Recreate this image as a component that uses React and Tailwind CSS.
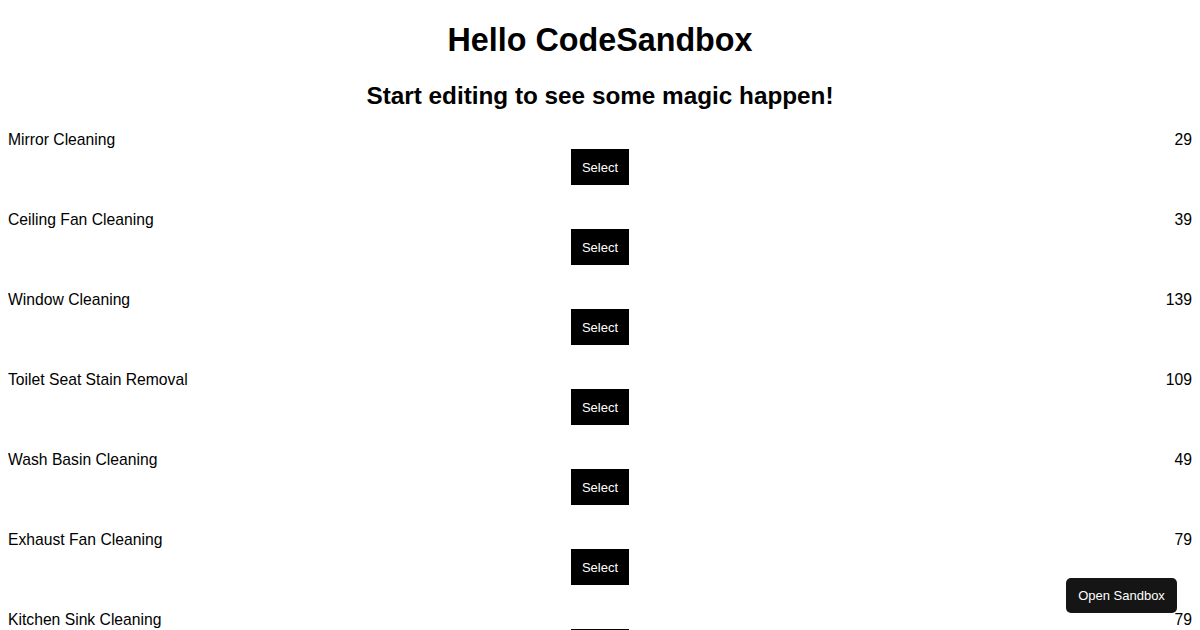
const SERVICES = [
  { name: 'Mirror Cleaning', price: 29 },
  { name: 'Ceiling Fan Cleaning', price: 39 },
  { name: 'Window Cleaning', price: 139 },
  { name: 'Toilet Seat Stain Removal', price: 109 },
  { name: 'Wash Basin Cleaning', price: 49 },
  { name: 'Exhaust Fan Cleaning', price: 79 },
  { name: 'Kitchen Sink Cleaning', price: 79 },
]

function ServiceRow({ name, price }) {
  return (
    <div className="flex flex-col h-20">
      <div className="flex justify-between text-[15.7px] leading-[18px]">
        <span>{name}</span>
        <span>{price}</span>
      </div>
      <button className="self-center h-9 px-[11px] bg-black text-white text-[13px] leading-none">
        Select
      </button>
    </div>
  )
}

export default function App() {
  return (
    <div className="min-h-screen bg-white text-black px-2" style={{ fontFamily: '"Liberation Sans", Arial, sans-serif' }}>
      <h1 className="text-center font-bold text-[32.3px] leading-[37px] pt-[22px]">Hello CodeSandbox</h1>
      <h2 className="text-center font-bold text-[24.3px] leading-[28px] mt-[23px]">Start editing to see some magic happen!</h2>

      <div className="mt-[21px]">
        {SERVICES.map(s => <ServiceRow key={s.name} {...s} />)}
      </div>

      <button className="fixed right-[23px] bottom-[17px] w-[111px] h-[35px] rounded-[5px] bg-[#151515] text-white text-[13px]">
        Open Sandbox
      </button>
    </div>
  )
}
